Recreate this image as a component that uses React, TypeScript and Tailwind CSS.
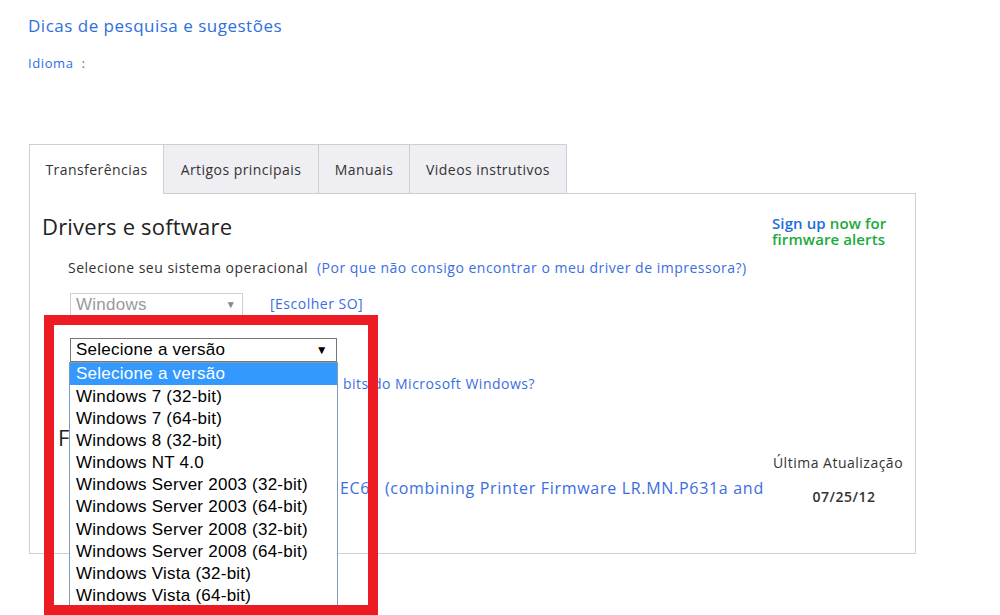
import React from "react";

const versions = [
  "Selecione a versão",
  "Windows 7 (32-bit)",
  "Windows 7 (64-bit)",
  "Windows 8 (32-bit)",
  "Windows NT 4.0",
  "Windows Server 2003 (32-bit)",
  "Windows Server 2003 (64-bit)",
  "Windows Server 2008 (32-bit)",
  "Windows Server 2008 (64-bit)",
  "Windows Vista (32-bit)",
  "Windows Vista (64-bit)",
];

export default function App() {
  return (
    <div className="relative w-[1000px] h-[615px] overflow-hidden bg-white font-['Open_Sans',sans-serif] text-[#333]">
      {/* Top links */}
      <div className="pl-[28px] pt-[14px]">
        <div className="text-[17px] leading-[24px] tracking-[0.5px] text-[#2d6fe0]">Dicas de pesquisa e sugestões</div>
        <div className="mt-[16px] text-[13px] leading-[18px] tracking-[0.6px] text-[#2d6fe0]">Idioma&nbsp; :</div>
      </div>

      {/* Tabs */}
      <div className="ml-[29px] mt-[72px] flex h-[49px] text-[14px] tracking-[0.45px] text-[#333]">
        <div className="relative z-10 flex h-[50px] w-[134px] items-center justify-center border-l border-t border-[#cfcfcf] bg-white">
          Transferências
        </div>
        <div className="flex w-[155px] items-center justify-center border-l border-t border-[#cfcfcf] bg-[#eeeef3]">
          Artigos principais
        </div>
        <div className="flex w-[91px] items-center justify-center border-l border-t border-[#cfcfcf] bg-[#eeeef3]">
          Manuais
        </div>
        <div className="flex w-[158px] items-center justify-center border-l border-r border-t border-[#cfcfcf] bg-[#eeeef3]">
          Videos instrutivos
        </div>
      </div>

      {/* Card */}
      <div className="ml-[29px] box-border h-[361px] w-[887px] border border-[#cfcfcf] pl-[12px]">
        <div className="flex items-start pt-[17px]">
          <div className="w-[730px] text-[22px] leading-[30px] tracking-[0.2px] text-[#222]">Drivers e software</div>
          <div className="mt-[4px] text-[15px] font-semibold leading-[16px] tracking-[0.1px] text-[#1aaa3b]">
            <span className="text-[#1a6fdb]">Sign up</span> now for
            <br />
            firmware alerts
          </div>
        </div>

        <div className="ml-[26px] mt-[11px] flex items-center text-[14px] leading-[20px] tracking-[0.5px]">
          <span className="text-[#333]">Selecione seu sistema operacional</span>
          <span className="ml-[9px] text-[#3a6ee0]">
            (Por que não consigo encontrar o meu driver de impressora?)
          </span>
        </div>

        <div className="ml-[28px] mt-[15px] flex items-center">
          <div className="box-border flex h-[23px] w-[173px] items-center justify-between border border-[#cfcfcf] bg-white pl-[5px] pr-[6px] font-['Liberation_Sans',sans-serif] text-[17px] tracking-[0.25px] text-[#9a9a9a]">
            <span>Windows</span>
            <span className="text-[10px] text-[#888]">▼</span>
          </div>
          <span className="-mt-[3px] ml-[27px] text-[14px] tracking-[0.5px] text-[#3a6ee0]">[Escolher SO]</span>
        </div>

        <div className="relative ml-[28px] mt-[22px] w-[267px]">
          <div className="box-border flex h-[24px] w-[267px] items-center justify-between border border-[#767676] bg-white pl-[5px] pr-[8px] font-['Liberation_Sans',sans-serif] text-[17px] tracking-[0.25px] text-black">
            <span>Selecione a versão</span>
            <span className="text-[12px]">▼</span>
          </div>
          <div className="absolute left-[-1px] top-full z-20 box-border w-[269px] border border-[#7f9db9] bg-white font-['Liberation_Sans',sans-serif] text-[17px] tracking-[0.25px] text-black">
            {versions.map((v, i) => (
              <div
                key={v}
                className={
                  i === 0
                    ? "flex h-[22.2px] items-center bg-[#3399ff] pl-[6px] text-white"
                    : "flex h-[22.2px] items-center pl-[6px]"
                }
              >
                {v}
              </div>
            ))}
          </div>
        </div>

        <div className="ml-[301px] mt-[13px] text-[14px] leading-[18px] tracking-[0.5px] text-[#3a6ee0]">
          bits do Microsoft Windows?
        </div>

        <div className="ml-[16px] mt-[29px] text-[22px] leading-[30px] text-[#222]">Firmware</div>

        <div className="mt-[1px] flex">
          <div className="w-[728px]" />
          <div className="w-[136px] text-center text-[14px] font-medium leading-[20px] tracking-[0.5px] text-[#333]">
            Última Atualização
          </div>
        </div>
        <div className="mt-[2px] flex">
          <div className="w-[728px] pl-[298px] pt-[2px] text-[16px] leading-[22px] tracking-[0.7px] text-[#3a6ee0]">
            <span className="whitespace-nowrap">EC61 (combining Printer Firmware LR.MN.P631a and</span>
          </div>
          <div className="mt-[12px] w-[136px] pl-[12px] text-center text-[14px] font-semibold leading-[20px] tracking-[0.5px] text-[#333]">
            07/25/12
          </div>
        </div>
      </div>

      {/* Red annotation box */}
      <div className="pointer-events-none absolute left-[44px] top-[315px] z-30 box-border h-[300px] w-[334px] border-[10px] border-[#ed1c24]" />
    </div>
  );
}
